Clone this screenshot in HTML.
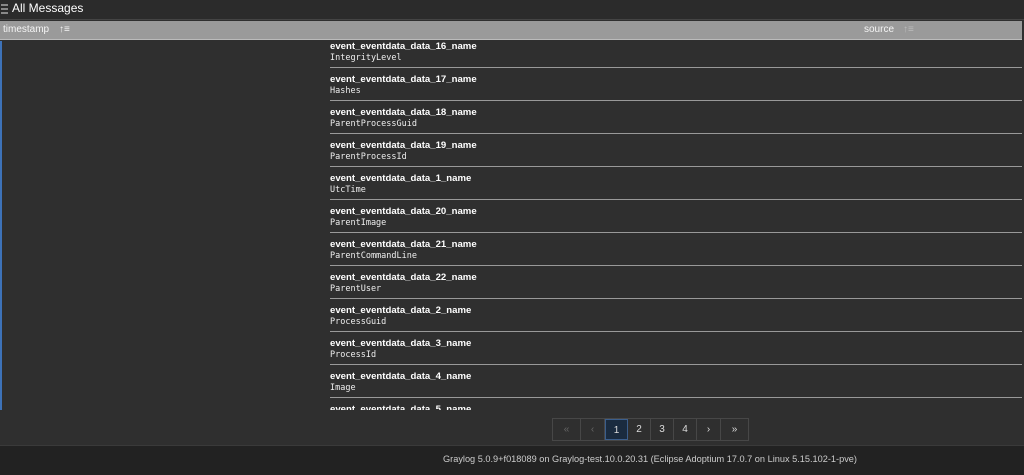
<!DOCTYPE html>
<html><head><style>
*{margin:0;padding:0;box-sizing:border-box}
body{width:1024px;height:475px;overflow:hidden;background:#2f2f2f;font-family:"Liberation Sans","DejaVu Sans",sans-serif;color:#fff;position:relative}
.top{position:absolute;left:0;top:0;width:1024px;height:20px;background:#2b2b2b;border-bottom:1px solid #444}
.top .t{position:absolute;left:12px;top:1px;font-size:12px;color:#fff}
.ham{position:absolute;left:1px;top:4px;width:7px;height:10px;border-top:2px solid #888;border-bottom:2px solid #888}
.ham:after{content:"";position:absolute;left:0;top:2px;width:7px;height:2px;background:#888}
.hdr{position:absolute;left:0;top:21px;width:1022px;height:19px;background:#9a9a9a;border-bottom:1px solid #bbb}
.hdr span{position:absolute;top:3px;font-size:10px;color:#f4f4f4}
.ic{position:absolute;top:2px;font-size:11px;color:#fff}
.blue{position:absolute;left:0;top:41px;width:2px;height:369px;background:#3d72b8}
.list{position:absolute;left:330px;top:41px;width:692px;height:369px;overflow:hidden}
.row{height:27px;border-bottom:1px solid #999;margin-bottom:6px}
.row b{display:block;font-size:9.6px;line-height:11px;color:#fff;font-weight:bold}
.row i{display:block;font-style:normal;font-family:"DejaVu Sans Mono","Liberation Mono",monospace;font-size:8.5px;line-height:11px;margin-top:1px;color:#eee}
.pg{position:absolute;left:552px;top:418px;display:flex;border:1px solid #474747}
.pg div{height:21px;border-right:1px solid #474747;font-size:10px;color:#ddd;text-align:center;line-height:21px;background:#2f2f2f}
.pg div.a{background:#1a2b3f;border:1px solid #3b5e8c}
.foot{position:absolute;left:0;top:445px;width:1024px;height:30px;background:#222;border-top:1px solid #3a3a3a}
.foot span{position:absolute;left:443px;top:8px;font-size:9.2px;color:#ccc}
</style></head><body>
<div class="top"><div class="ham"></div><div class="t">All Messages</div></div>
<div class="hdr"><span style="left:3px">timestamp</span><span class="ic" style="left:59px">↑≡</span><span style="left:864px">source</span><span class="ic" style="left:903px;color:#bbb">↑≡</span></div>
<div class="blue"></div>
<div class="list">
<div class="row"><b>event_eventdata_data_16_name</b><i>IntegrityLevel</i></div>
<div class="row"><b>event_eventdata_data_17_name</b><i>Hashes</i></div>
<div class="row"><b>event_eventdata_data_18_name</b><i>ParentProcessGuid</i></div>
<div class="row"><b>event_eventdata_data_19_name</b><i>ParentProcessId</i></div>
<div class="row"><b>event_eventdata_data_1_name</b><i>UtcTime</i></div>
<div class="row"><b>event_eventdata_data_20_name</b><i>ParentImage</i></div>
<div class="row"><b>event_eventdata_data_21_name</b><i>ParentCommandLine</i></div>
<div class="row"><b>event_eventdata_data_22_name</b><i>ParentUser</i></div>
<div class="row"><b>event_eventdata_data_2_name</b><i>ProcessGuid</i></div>
<div class="row"><b>event_eventdata_data_3_name</b><i>ProcessId</i></div>
<div class="row"><b>event_eventdata_data_4_name</b><i>Image</i></div>
<div class="row"><b>event_eventdata_data_5_name</b><i>&nbsp;</i></div>
</div>
<div class="pg">
<div style="width:28px;color:#666">«</div><div style="width:24px;color:#666">‹</div><div class="a" style="width:23px">1</div><div style="width:23px">2</div><div style="width:23px">3</div><div style="width:23px">4</div><div style="width:24px">›</div><div style="width:27px;border-right:none">»</div>
</div>
<div class="foot"><span>Graylog 5.0.9+f018089 on Graylog-test.10.0.20.31 (Eclipse Adoptium 17.0.7 on Linux 5.15.102-1-pve)</span></div>
</body></html>
